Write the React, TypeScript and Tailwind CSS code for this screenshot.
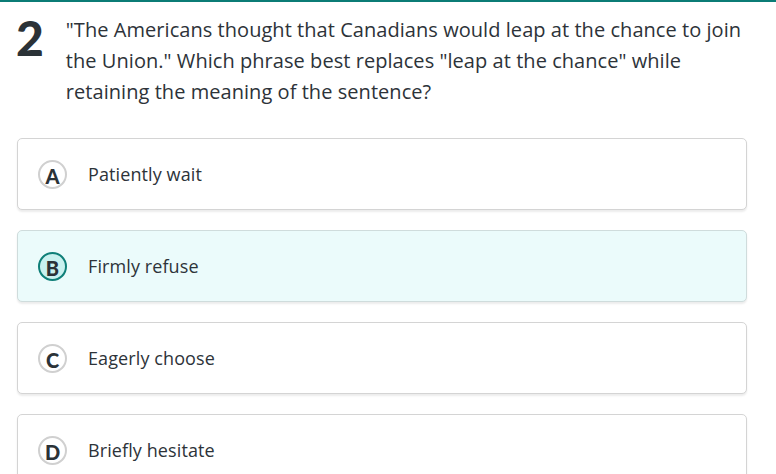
import React from 'react';

type Choice = { letter: string; text: string; selected?: boolean };

const choices: Choice[] = [
  { letter: 'A', text: 'Patiently wait' },
  { letter: 'B', text: 'Firmly refuse', selected: true },
  { letter: 'C', text: 'Eagerly choose' },
  { letter: 'D', text: 'Briefly hesitate' },
];

export default function App() {
  return (
    <div className="h-[474px] w-[776px] overflow-hidden bg-white font-['Open_Sans',sans-serif] text-[#2d3339]">
      <div className="h-[2px] bg-[#0b7c76]" />

      {/* Question */}
      <div className="flex gap-[22px] pl-[16px] pt-[12px]">
        <div className="pt-[4px] font-['Lato',sans-serif] text-[48px] font-black leading-[40px] text-[#2b3237]">2</div>
        <p className="w-[688px] text-[20px] leading-[31px] tracking-[0.05px]">
          "The Americans thought that Canadians would leap at the chance to join the Union." Which phrase best
          replaces "leap at the chance" while retaining the meaning of the sentence?
        </p>
      </div>

      {/* Choices */}
      <div className="mt-[31px] flex w-[730px] flex-col gap-[20px] ml-[17px]">
        {choices.map((c) => (
          <div
            key={c.letter}
            className={`flex h-[72px] items-center gap-[21px] rounded-[5px] border px-[20px] shadow-[0_2px_2px_rgba(0,0,0,0.08)] ${
              c.selected ? 'border-[#cfdcdc] bg-[#ebfbfb]' : 'border-[#d4d4d4] bg-white'
            }`}
          >
            <span
              className={`flex h-[29px] w-[29px] items-center justify-center rounded-full border-2 pt-[4px] font-['Lato',sans-serif] text-[20px] font-black leading-none ${
                c.selected ? 'border-[#0f7f78] bg-[#c9f1ef] text-[#2b3237]' : 'border-[#d0d0d0] bg-white text-[#2b3237]'
              }`}
            >
              {c.letter}
            </span>
            <span className="text-[18px] tracking-[0.1px] text-[#2d3339]">{c.text}</span>
          </div>
        ))}
      </div>
    </div>
  );
}
